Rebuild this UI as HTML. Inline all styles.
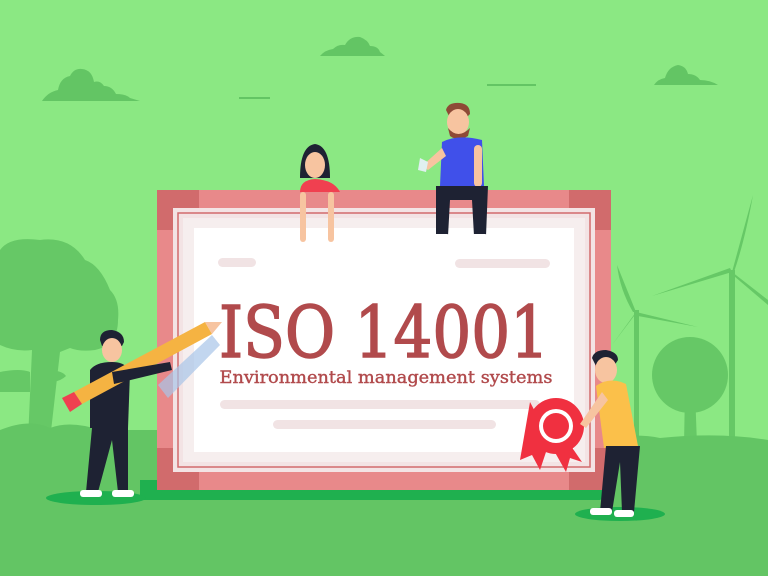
<!DOCTYPE html>
<html><head><meta charset="utf-8"><style>
html,body{margin:0;padding:0;width:768px;height:576px;overflow:hidden;background:#8be883}
svg{display:block}
</style></head><body>
<svg width="768" height="576" viewBox="0 0 768 576" xmlns="http://www.w3.org/2000/svg">
<rect width="768" height="576" fill="#8be883"/>
<g fill="#63c564">
<path d="M42 101 Q48 92 58 90 Q60 78 70 76 Q74 68 82 69 Q92 70 94 82 Q100 80 104 86 Q112 86 116 94 Q126 94 130 98 L140 101Z"/>
<path d="M320 56 Q325 50 333 49 Q338 44 345 45 Q350 36 360 37 Q368 40 370 46 Q378 46 380 52 L385 56Z"/>
<path d="M654 85 Q658 79 665 78 Q668 67 678 65 Q686 66 688 74 Q696 74 700 80 Q710 80 718 85Z"/>
<rect x="239" y="97" width="31" height="2"/>
<rect x="487" y="84" width="49" height="2"/>
</g>
<g fill="#66c866">
<path d="M0 250 Q10 236 40 240 Q70 236 85 260 Q100 265 110 290 Q120 300 118 320 Q118 345 95 350 Q80 352 70 348 L60 352 L50 440 L28 440 L32 350 Q15 352 0 345Z"/>
<path d="M0 372 Q20 368 30 372 L30 392 L0 392Z"/>
<path d="M40 372 Q60 368 66 376 Q58 384 40 382Z"/>
</g>
<g fill="#66c866">
<rect x="634" y="310" width="5" height="130"/>
<path d="M636 312 L617 265 Q620 290 633 312Z"/>
<path d="M636 312 L698 327 L638 316Z"/>
<path d="M636 312 L612 345 L634 316Z"/>
<rect x="729" y="270" width="6" height="175"/>
<path d="M732 272 L753 195 Q745 240 734 272Z"/>
<path d="M732 272 L652 296 L730 268Z"/>
<path d="M732 272 L768 300 L768 305 L734 276Z"/>
<circle cx="690" cy="375" r="38"/>
<path d="M685 390 L695 390 L697 445 L684 445Z"/>
</g>
<path d="M0 430 Q30 418 50 428 Q70 420 100 430 L160 430 L160 576 L0 576Z" fill="#63c564"/>
<path d="M560 448 Q620 430 660 438 Q720 432 768 440 L768 576 L560 576Z" fill="#63c564"/>
<rect x="0" y="465" width="768" height="111" fill="#63c564"/>
<path d="M140 480 L600 480 Q620 490 600 500 L140 500Z" fill="#1fb04f"/>
<ellipse cx="96" cy="498" rx="50" ry="7" fill="#1fb04f"/>
<ellipse cx="620" cy="514" rx="45" ry="7" fill="#1fb04f"/>
<rect x="157" y="190" width="454" height="300" fill="#e8898a"/>
<rect x="157" y="190" width="42" height="40" fill="#d16b6c"/>
<rect x="569" y="190" width="42" height="40" fill="#d16b6c"/>
<rect x="157" y="448" width="42" height="42" fill="#d16b6c"/>
<rect x="569" y="448" width="42" height="42" fill="#d16b6c"/>
<rect x="173" y="208" width="422" height="264" fill="#f3e3e4"/>
<rect x="178" y="213" width="412" height="254" fill="none" stroke="#d16b6c" stroke-width="1.5"/>
<rect x="183" y="218" width="402" height="244" fill="#f6eeee"/>
<rect x="194" y="228" width="380" height="224" fill="#ffffff"/>
<g fill="#f1e3e4">
<rect x="218" y="258" width="38" height="9" rx="4.5"/>
<rect x="455" y="259" width="95" height="9" rx="4.5"/>
<rect x="220" y="400" width="320" height="9" rx="4.5"/>
<rect x="273" y="420" width="223" height="9" rx="4.5"/>
</g>
<text x="384" y="357" text-anchor="middle" font-family="'DejaVu Serif', serif" font-size="71" fill="#b14a4c" stroke="#b14a4c" stroke-width="1.6" textLength="330" lengthAdjust="spacingAndGlyphs">ISO 14001</text>
<text x="386" y="383" text-anchor="middle" font-family="'DejaVu Serif', serif" font-size="17" fill="#b14a4c" stroke="#b14a4c" stroke-width="0.4" textLength="333" lengthAdjust="spacingAndGlyphs">Environmental management systems</text>
<path d="M300 178 Q300 146 315 144 Q330 146 330 178Z" fill="#1e2233"/>
<ellipse cx="315" cy="165" rx="10" ry="13" fill="#f7c4a0"/>
<path d="M300 192 Q300 180 315 179 Q334 180 340 192Z" fill="#f04050"/>
<rect x="300" y="192" width="6" height="50" rx="3" fill="#f7c4a0"/>
<rect x="328" y="192" width="6" height="50" rx="3" fill="#f7c4a0"/>
<path d="M446 110 Q448 102 460 103 Q470 104 470 114 L466 118 L450 118Z" fill="#8e4a36"/>
<ellipse cx="458" cy="122" rx="11" ry="13" fill="#f7c4a0"/>
<path d="M448 128 Q458 140 470 128 L468 136 Q458 142 450 136Z" fill="#8e4a36"/>
<path d="M440 186 L442 142 Q458 134 482 140 L484 186Z" fill="#4050ea"/>
<path d="M442 148 L422 166 L428 170 L446 156Z" fill="#f7c4a0"/>
<path d="M420 158 L428 162 L426 172 L418 170Z" fill="#e0f0f0"/>
<rect x="474" y="145" width="8" height="42" rx="4" fill="#f7c4a0"/>
<path d="M436 186 L488 186 L486 236 L474 236 L472 200 L450 200 L448 236 L436 236Z" fill="#1e2233"/>
<rect x="432" y="234" width="18" height="6" rx="3" fill="#fff"/>
<rect x="470" y="234" width="18" height="6" rx="3" fill="#fff"/>
<path d="M158 385 L212 335 L220 345 L168 398Z" fill="#a8c4e8" opacity="0.7"/>
<path d="M100 340 Q100 330 112 330 Q124 332 124 342 L122 346 L102 346Z" fill="#1e2233"/>
<ellipse cx="112" cy="350" rx="10" ry="12" fill="#f7c4a0"/>
<path d="M90 370 Q96 362 112 362 Q126 362 130 372 L128 428 L90 428Z" fill="#1e2233"/>
<path d="M92 428 L128 428 L128 492 L118 492 L112 440 L98 492 L86 492Z" fill="#1e2233"/>
<rect x="80" y="490" width="22" height="7" rx="3" fill="#fff"/>
<rect x="112" y="490" width="22" height="7" rx="3" fill="#fff"/>
<path d="M74 392 L205 322 L212 334 L82 404Z" fill="#f5b342"/>
<path d="M205 322 L222 322 L212 334Z" fill="#f7c4a0"/>
<path d="M62 398 L74 392 L82 404 L70 412Z" fill="#f04050"/>
<path d="M112 372 L170 362 L172 370 L114 384Z" fill="#1e2233"/>
<path d="M530 402 L520 460 L532 455 L540 470 L550 440Z" fill="#f03040"/>
<path d="M560 430 L582 462 L570 458 L566 472 L548 440Z" fill="#f03040"/>
<circle cx="556" cy="426" r="28" fill="#f03040"/>
<circle cx="556" cy="426" r="17" fill="#fff"/>
<circle cx="556" cy="426" r="13" fill="#f03040"/>
<path d="M592 358 Q594 350 606 350 Q618 352 618 360 L614 366 L596 366Z" fill="#1e2233"/>
<ellipse cx="606" cy="370" rx="11" ry="13" fill="#f7c4a0"/>
<path d="M596 386 Q610 376 626 384 L638 446 L604 448Z" fill="#fbc04a"/>
<path d="M602 392 L580 424 L586 428 L608 400Z" fill="#f7c4a0"/>
<path d="M606 446 L640 446 L634 512 L622 512 L620 462 L612 512 L600 512Z" fill="#1e2233"/>
<rect x="590" y="508" width="22" height="7" rx="3" fill="#fff"/>
<rect x="614" y="510" width="20" height="7" rx="3" fill="#fff"/>
</svg>
</body></html>
